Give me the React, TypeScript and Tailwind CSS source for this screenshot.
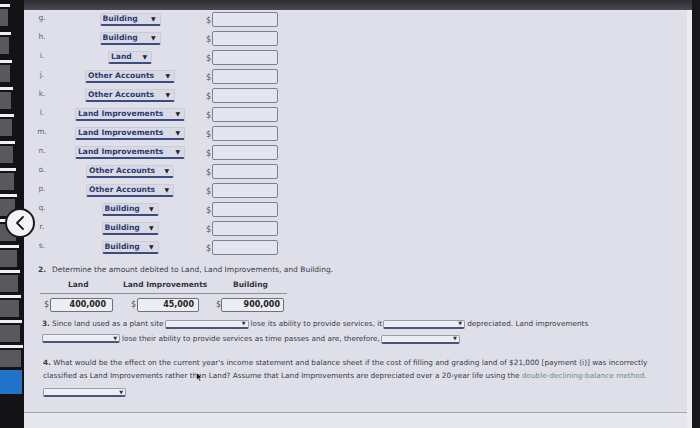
import React from "react";

const font = { fontFamily: '"DejaVu Sans", Verdana, sans-serif' };

type Row = { l: string; acct: string; w: number };
const rows: Row[] = [
  { l: "g.", acct: "Building", w: 61 },
  { l: "h.", acct: "Building", w: 61 },
  { l: "i.", acct: "Land", w: 44 },
  { l: "j.", acct: "Other Accounts", w: 90 },
  { l: "k.", acct: "Other Accounts", w: 90 },
  { l: "l.", acct: "Land Improvements", w: 110 },
  { l: "m.", acct: "Land Improvements", w: 110 },
  { l: "n.", acct: "Land Improvements", w: 110 },
  { l: "o.", acct: "Other Accounts", w: 88 },
  { l: "p.", acct: "Other Accounts", w: 88 },
  { l: "q.", acct: "Building", w: 57 },
  { l: "r.", acct: "Building", w: 57 },
  { l: "s.", acct: "Building", w: 57 },
];

function Arrow() {
  return <span className="text-[6px] leading-none text-[#222]">▼</span>;
}

function AcctSelect({ text, w }: { text: string; w: number }) {
  return (
    <div
      className="flex h-[13px] items-center justify-between rounded-[2px] border border-[#c9cbd7] border-b-2 border-b-[#3b4c80] bg-[#d9dae6] pl-[2px] pr-[4px]"
      style={{ width: w }}
    >
      <span className="text-[7.6px] font-bold leading-none text-[#2c3c6e]">{text}</span>
      <Arrow />
    </div>
  );
}

function EmptySelect({ w }: { w: number }) {
  return (
    <span
      className="inline-flex h-[9px] items-center justify-end rounded-[2px] border border-[#9a9ca8] border-b-2 border-b-[#4b5578] bg-[#eceef4] pr-[2px] align-middle"
      style={{ width: w }}
    >
      <span className="text-[5px] leading-none text-[#333]">▼</span>
    </span>
  );
}

function LeftStrip() {
  const items = [
    { h: 28, w: 8 },
    { h: 28, w: 9 },
    { h: 27, w: 10 },
    { h: 27, w: 11 },
    { h: 27, w: 12 },
    { h: 27, w: 13 },
    { h: 26, w: 14 },
    { h: 25, w: 15 },
    { h: 26, w: 16 },
    { h: 25, w: 17 },
    { h: 25, w: 18 },
    { h: 25, w: 19 },
    { h: 25, w: 20 },
    { h: 25, w: 21 },
  ];
  return (
    <div className="flex w-[24px] shrink-0 flex-col bg-[#131315] pt-[4px]">
      {items.map((it, i) => (
        <div key={i} className="flex flex-col" style={{ height: it.h }}>
          <div className="h-[3px] bg-[#f0f0f3]" style={{ width: it.w + 2 }} />
          <div className="mt-[2px] h-[17px] bg-[#58585d]" style={{ width: it.w }} />
        </div>
      ))}
      <div className="h-[24px] w-[22px] bg-[#1f73c8]" />
      <div className="flex-1" />
    </div>
  );
}

export default function App() {
  return (
    <div className="relative h-[428px] w-[700px] overflow-hidden bg-[#111113]" style={font}>
      <div className="flex h-full w-full">
        <LeftStrip />
        <div className="flex min-w-0 flex-1 flex-col">
          <div className="h-[10px] w-full bg-gradient-to-b from-[#2c2c31] to-[#4a4a51]" />
          <div className="flex flex-1 flex-col border-r-[5px] border-r-[#ececf2] bg-[#dedfe8]">
            {/* question 1 rows */}
            <div className="flex flex-col">
              {rows.map((r, i) => (
                <div key={i} className="flex h-[19px] items-center">
                  <div className="w-[30px] shrink-0 pl-[6px] text-center text-[7.5px] leading-none text-[#5d6070]">
                    <span className="-mt-[4px] block">{r.l}</span>
                  </div>
                  <div className="flex w-[152px] shrink-0 justify-center">
                    <div className="-mt-[1px]">
                      <AcctSelect text={r.acct} w={r.w} />
                    </div>
                  </div>
                  <span className="mt-[2px] w-[6px] text-[8px] leading-none text-[#555]">$</span>
                  <div className="h-[15px] w-[66px] rounded-[2px] border border-[#80818c] bg-[#e4e5ee]" />
                </div>
              ))}
            </div>

            {/* question 2 */}
            <div className="mt-[8px] flex items-center pl-[14px] text-[7.5px] leading-[10px] text-[#3b3c48]">
              <span className="w-[14px] font-bold">2.</span>
              <span>Determine the amount debited to Land, Land Improvements, and Building.</span>
            </div>
            <div className="ml-[16px] mt-[5px] flex w-[247px] whitespace-nowrap border-b border-b-[#8e8f9a] pb-[3px] text-[7.5px] font-bold leading-[10px] text-[#33343f]">
              <div className="w-[83px] pl-[28px]">Land</div>
              <div className="w-[90px] pl-[0px]">Land Improvements</div>
              <div className="w-[74px] pl-[20px]">Building</div>
            </div>
            <div className="ml-[20px] mt-[4px] flex items-center text-[8px]">
              <span className="w-[6px] text-[#555]">$</span>
              <div className="flex h-[14px] w-[63px] items-center justify-end rounded-[2px] border border-[#6e6f7a] bg-[#eceef3] pr-[6px] font-bold text-[#222]">400,000</div>
              <span className="ml-[18px] w-[6px] text-[#555]">$</span>
              <div className="flex h-[14px] w-[62px] items-center justify-end rounded-[2px] border border-[#6e6f7a] bg-[#eceef3] pr-[4px] font-bold text-[#222]">45,000</div>
              <span className="ml-[17px] w-[5px] text-[#555]">$</span>
              <div className="flex h-[14px] w-[63px] items-center justify-end rounded-[2px] border border-[#6e6f7a] bg-[#eceef3] pr-[3px] font-bold text-[#222]">900,000</div>
            </div>

            {/* question 3 */}
            <div className="ml-[18px] mt-[6px] flex flex-col gap-[4px] text-[7.3px] leading-[11px] text-[#3b3c48]">
              <div className="flex items-center whitespace-nowrap">
                <span className="w-[10px] font-bold">3.</span>
                <span>Since land used as a plant site</span>
                <span className="ml-[1px]"><EmptySelect w={84} /></span>
                <span className="ml-[2px]">lose its ability to provide services, it</span>
                <span className="ml-[1px]"><EmptySelect w={82} /></span>
                <span className="ml-[2px]">depreciated. Land improvements</span>
              </div>
              <div className="flex items-center whitespace-nowrap">
                <EmptySelect w={78} />
                <span className="ml-[2px]">lose their ability to provide services as time passes and are, therefore,</span>
                <span className="ml-[1px]"><EmptySelect w={79} /></span>
              </div>
            </div>

            {/* question 4 */}
            <div className="ml-[19px] mt-[12px] w-[640px] text-[7.3px] leading-[13px] text-[#3b3c48]">
              <div className="whitespace-nowrap">
                <span className="font-bold">4.</span> What would be the effect on the current year's income statement and balance sheet if the cost of filling and grading land of $21,000 [payment (i)] was incorrectly
              </div>
              <div className="whitespace-nowrap">
                classified as Land Improvements rather than Land? Assume that Land Improvements are depreciated over a 20-year life using the{" "}
                <span className="text-[#6f8f80]">double-declining-balance method.</span>
              </div>
            </div>
            <div className="ml-[19px] -mt-[2px]">
              <EmptySelect w={83} />
            </div>
            <div className="flex-1" />
            <div className="h-[16px] border-t border-t-[#a3a4ae] bg-[#e6e7ec]" />
          </div>
        </div>
        <div className="w-[8px] shrink-0 bg-[#18181b]" />
      </div>

      {/* back button */}
      <div className="absolute left-[5px] top-[208px] flex h-[30px] w-[30px] items-center justify-center rounded-full border-2 border-[#1a1a1c] bg-[#f4f4f6]">
        <svg width="12" height="14" viewBox="0 0 12 14">
          <path d="M9 1 L3 7 L9 13" fill="none" stroke="#1a1a1c" strokeWidth="1.8" strokeLinecap="round" strokeLinejoin="round" />
        </svg>
      </div>

      {/* mouse cursor */}
      <svg className="absolute left-[196px] top-[372px]" width="7" height="10" viewBox="0 0 7 10">
        <path d="M0.5 0.5 L0.5 8 L2.3 6.3 L3.6 9.3 L4.8 8.8 L3.6 5.9 L6 5.9 Z" fill="#111" stroke="#fff" strokeWidth="0.5" />
      </svg>
    </div>
  );
}
